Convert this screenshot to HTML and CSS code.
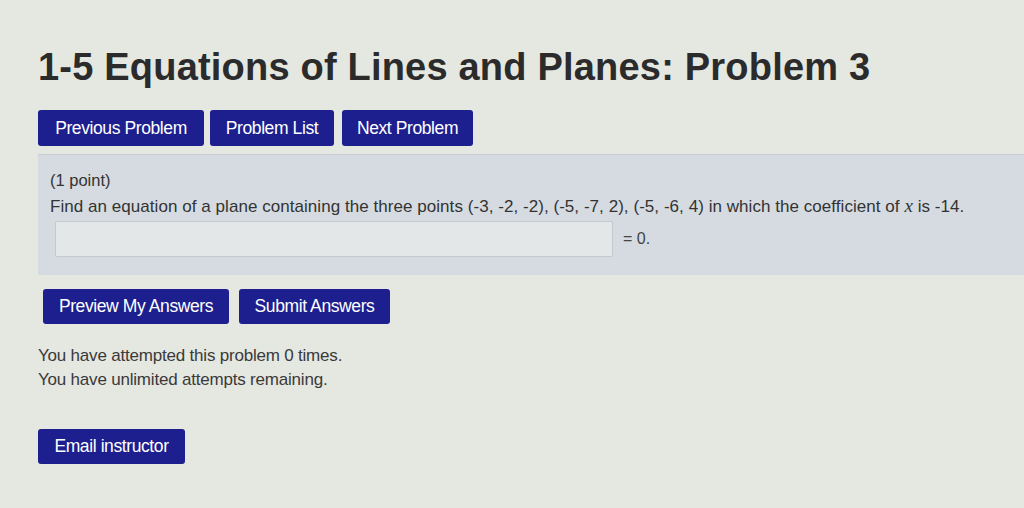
FILE: index.html
```html
<!DOCTYPE html>
<html>
<head>
<meta charset="utf-8">
<link rel="stylesheet" href="styles.css">
</head>
<body>
<div class="page">
  <h1 class="title">1-5 Equations of Lines and Planes: Problem 3</h1>
  <div class="nav">
    <a class="btn">Previous Problem</a>
    <a class="btn">Problem List</a>
    <a class="btn btn-next">Next Problem</a>
  </div>
  <div class="problem">
    <div class="points">(1 point)</div>
    <div class="question">Find an equation of a plane containing the three points (-3, -2, -2), (-5, -7, 2), (-5, -6, 4) in which the coefficient of <span class="math">x</span> is -14.</div>
    <div class="answer-row">
      <div class="answer-input"></div>
      <span class="eq">= 0.</span>
    </div>
  </div>
  <div class="submit-row">
    <a class="btn btn-lg">Preview My Answers</a>
    <a class="btn btn-lg">Submit Answers</a>
  </div>
  <div class="attempts">
    <div>You have attempted this problem 0 times.</div>
    <div>You have unlimited attempts remaining.</div>
  </div>
  <div class="email-row">
    <a class="btn btn-lg">Email instructor</a>
  </div>
</div>
</body>
</html>
```

FILE: styles.css
```css
html, body {
  margin: 0;
  padding: 0;
}
body {
  background: #e5e7e1;
  font-family: "Liberation Sans", Arial, sans-serif;
  color: #333333;
  width: 1024px;
  height: 508px;
  overflow: hidden;
}
.page {
  padding: 44px 0 0 38px;
}
.title {
  margin: 0;
  font-size: 38px;
  font-weight: bold;
  color: #2b2b2c;
  line-height: 46px;
  letter-spacing: 0.2px;
}
.nav {
  display: flex;
  gap: 6px;
  margin-top: 20px;
}
.btn {
  display: inline-flex;
  align-items: center;
  justify-content: center;
  background: #1d1f8e;
  color: #ffffff;
  font-size: 17.5px;
  border-radius: 3px;
  height: 36px;
  padding: 0 10px;
  box-sizing: border-box;
  letter-spacing: -0.4px;
  white-space: nowrap;
}
.nav .btn:first-child {
  width: 166px;
}
.nav .btn:nth-child(2) {
  width: 124px;
}
.btn-next {
  width: 131px;
  margin-left: 2px;
}
.problem {
  margin-top: 8px;
  background: #d5dbe1;
  border-top: 1px solid #c6ccd2;
  padding: 15px 0 14px 12px;
  height: 91px;
}
.points {
  font-size: 16.5px;
  line-height: 20px;
}
.question {
  font-size: 17px;
  line-height: 22px;
  margin-top: 5px;
  letter-spacing: 0.05px;
}
.math {
  font-family: "Liberation Serif", "Times New Roman", serif;
  font-style: italic;
  font-size: 19px;
}
.answer-row {
  display: flex;
  align-items: center;
  margin-top: 3px;
  margin-left: 5px;
}
.answer-input {
  width: 556px;
  height: 34px;
  background: #e3e7e8;
  border: 1px solid #c3c9cc;
  border-radius: 2px;
}
.eq {
  font-size: 16px;
  margin-left: 10px;
  color: #444;
}
.submit-row {
  display: flex;
  gap: 10px;
  margin-top: 14px;
  margin-left: 5px;
}
.btn-lg {
  height: 35px;
}
.submit-row .btn:first-child {
  width: 186px;
}
.submit-row .btn:nth-child(2) {
  width: 151px;
}
.attempts {
  margin-top: 20px;
  font-size: 17px;
  line-height: 24px;
  color: #3a3a3a;
  letter-spacing: -0.2px;
}
.email-row {
  display: flex;
  margin-top: 37px;
}
.email-row .btn {
  width: 147px;
}
```
